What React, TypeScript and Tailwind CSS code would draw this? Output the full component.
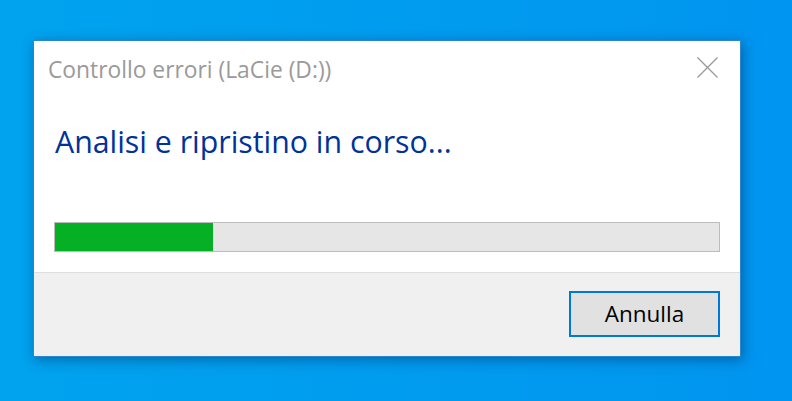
function ProgressBar({ value }: { value: number }) {
  return (
    <div className="h-[30px] w-full border border-[#bcbcbc] bg-[#e6e6e6]">
      <div className="h-full bg-[#06b025]" style={{ width: `${value}%` }} />
    </div>
  );
}

export default function App() {
  const font = { fontFamily: '"Open Sans", "Noto Sans", sans-serif' };

  return (
    <div
      className="w-[792px] h-[401px] overflow-hidden bg-linear-to-r from-[#01a3ee] to-[#0095f0] pt-[40px] pl-[33px]"
      style={font}
    >
      <div className="flex h-[317px] w-[708px] flex-col border border-[#2b86cc] bg-white shadow-[2px_3px_12px_rgba(0,40,90,0.45)]">
        {/* Title bar */}
        <div className="flex items-start justify-between pt-[14px] pl-[14px]">
          <span className="text-[22.8px] leading-[30px] text-[#9a9a9a]">
            Controllo errori (LaCie (D:))
          </span>
          <svg
            width="21"
            height="21"
            viewBox="0 0 21 21"
            className="mt-[2px] mr-[22px]"
          >
            <path d="M0.5 0.5 L20.5 20.5 M20.5 0.5 L0.5 20.5" stroke="#999999" strokeWidth="1.3" />
          </svg>
        </div>

        {/* Content */}
        <div className="flex flex-1 flex-col px-[20px]">
          <h1 className="mt-[37px] pl-[1px] text-[30.3px] leading-[40px] font-normal text-[#003399]">
            Analisi e ripristino in corso...
          </h1>
          <div className="mt-[60px]">
            <ProgressBar value={23.8} />
          </div>
        </div>

        {/* Footer */}
        <div className="flex h-[84px] justify-end border-t border-[#dfdfdf] bg-[#f0f0f0] pt-[18px] pr-[20px]">
          <button className="flex h-[46px] w-[151px] items-center justify-center border-2 border-[#0078d7] bg-[#e1e1e1] text-[22.5px] text-black">
            Annulla
          </button>
        </div>
      </div>
    </div>
  );
}
